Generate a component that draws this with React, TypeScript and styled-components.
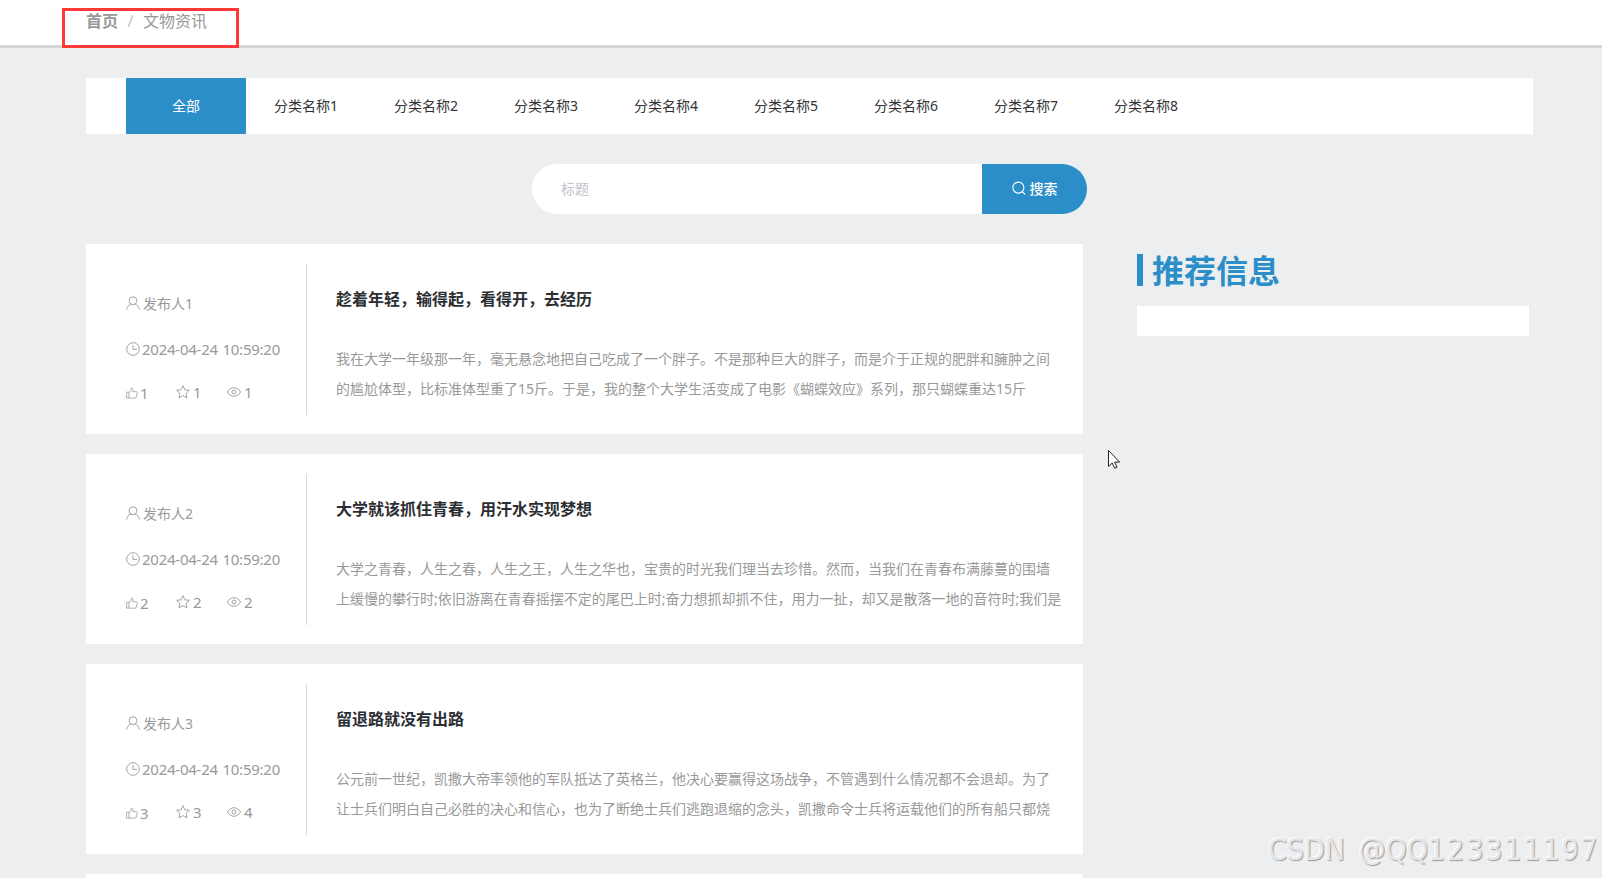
import React from "react";
import styled, { createGlobalStyle } from "styled-components";

const GlobalStyle = createGlobalStyle`
  * { box-sizing: border-box; }
  html, body { margin: 0; height: 100%; overflow: hidden; }
  body {
    background: #edeef0;
    font-family: "Noto Sans", "Noto Sans CJK SC", sans-serif;
    font-size: 14px;
    color: #333;
  }
`;

const Page = styled.div`
  position: relative;
  width: 1602px;
  height: 878px;
  overflow: hidden;
`;

const Header = styled.header`
  height: 48px;
  padding: 6px 86px 0;
  background: #fff;
  border-bottom: 3px solid #d3d7da;
`;

const Breadcrumb = styled.nav`
  display: flex;
  font-size: 16px;
  line-height: 30px;
  color: #999;
`;

const Crumb = styled.span<{ $home?: boolean }>`
  font-weight: ${(p) => (p.$home ? 700 : 400)};
`;

const Separator = styled.span`
  width: 25px;
  text-align: center;
  color: #c0c4cc;
`;

const Highlight = styled.div`
  position: absolute;
  left: 62px;
  top: 8px;
  width: 177px;
  height: 40px;
  border: 3px solid #ff3838;
`;

const Main = styled.main`
  padding: 30px 69px 0 86px;
`;

const Tabs = styled.div`
  display: flex;
  height: 56px;
  padding-left: 40px;
  background: #fff;
`;

const Tab = styled.div<{ $active?: boolean }>`
  width: 120px;
  line-height: 56px;
  text-align: center;
  color: ${(p) => (p.$active ? "#fff" : "#333")};
  background: ${(p) => (p.$active ? "#2c8ec9" : "transparent")};
`;

const Search = styled.div`
  display: flex;
  width: 555px;
  height: 50px;
  margin: 30px 0 30px 446px;
  border-radius: 25px;
  overflow: hidden;
`;

const SearchField = styled.div`
  width: 450px;
  padding-left: 29px;
  line-height: 50px;
  color: #c0c4cc;
  background: #fff;
`;

const SearchButton = styled.div`
  display: flex;
  flex: 1;
  align-items: center;
  justify-content: center;
  gap: 4px;
  padding-bottom: 2px;
  color: #fff;
  font-weight: 500;
  background: #2c8ec9;
`;

const Columns = styled.div`
  display: flex;
  align-items: flex-start;
  gap: 54px;
`;

const List = styled.div`
  display: flex;
  flex-direction: column;
  gap: 20px;
  width: 997px;
`;

const Card = styled.article`
  display: flex;
  height: 190px;
  padding: 19px 0 19px 40px;
  background: #fff;
`;

const Meta = styled.div`
  display: flex;
  flex-direction: column;
  width: 181px;
  margin-top: 1px;
  border-right: 1px solid #d9d9d9;
  color: #999;
`;

const MetaRow = styled.div<{ $top: number }>`
  display: flex;
  align-items: center;
  height: 24px;
  margin-top: ${(p) => p.$top}px;
  white-space: nowrap;
`;

const Author = styled.span`
  margin-left: 3px;
`;

const Time = styled.span`
  margin-left: 2px;
  font-size: 15px;
  letter-spacing: -0.25px;
  word-spacing: 1px;
`;

const Stat = styled.span<{ $drop?: boolean }>`
  display: flex;
  align-items: center;
  width: ${(p) => (p.$drop ? 50 : 51)}px;
  gap: ${(p) => (p.$drop ? 2 : 3)}px;
  font-size: 15px;
  padding-top: ${(p) => (p.$drop ? 2 : 0)}px;
`;

const Body = styled.div`
  padding: 21px 0 0 29px;
`;

const Title = styled.h3`
  margin: 0 0 30px;
  font-size: 16px;
  line-height: 30px;
  font-weight: 700;
  color: #2b2f33;
`;

const Line = styled.p`
  margin: 0;
  line-height: 30px;
  color: #999;
  white-space: nowrap;
`;

const Aside = styled.aside`
  width: 392px;
  padding-top: 10px;
`;

const AsideTitle = styled.h2`
  display: flex;
  height: 32px;
  margin: 0 0 20px;
  padding-left: 9px;
  border-left: 6px solid #2c8ec9;
  font-size: 32px;
  line-height: 34px;
  color: #2c8ec9;
`;

const AsideBox = styled.div`
  height: 30px;
  background: #fff;
`;

const Cursor = styled.svg`
  position: absolute;
  left: 1107px;
  top: 449px;
`;

const Watermark = styled.div`
  position: absolute;
  left: 1268px;
  top: 832px;
  font-family: "DejaVu Sans Condensed", "DejaVu Sans", sans-serif;
  font-stretch: condensed;
  font-size: 30px;
  line-height: 36px;
  word-spacing: 5px;
  color: #e6e7e9;
  text-shadow: 1px 1px 1px #999a9c, -1px -1px 1px #fff;
  white-space: nowrap;
`;

const WatermarkDigits = styled.span`
  letter-spacing: 1.9px;
`;

const Svg = styled.svg`
  flex: none;
  fill: none;
  stroke: currentColor;
  stroke-width: 0.9;
  stroke-linejoin: round;
`;

type IconName = "user" | "time" | "thumb" | "star" | "view" | "search";

const shapes: Record<IconName, React.ReactNode> = {
  user: <><circle cx="7" cy="4.7" r="3.9" /><path d="M.6 13.6C1.1 10.6 2.8 8.6 5 8M13.4 13.6C12.9 10.6 11.2 8.6 9 8" /></>,
  time: <><circle cx="7" cy="7" r="6.3" /><path d="M7 3v4.4h4" /></>,
  thumb: <path d="M.7 6h2.7v7H.7zM3.4 6.4C5.2 5.5 6 4 6 1.4c1.9-.5 2.6 1.2 1.8 4h4.2c1 0 1.4.6 1.2 1.4L11.9 12c-.2.7-.5 1-1.1 1H3.4" />,
  star: <path d="m7 .7 1.9 4.1 4.5.5-3.3 3 .9 4.6-4-2.3-4 2.3.9-4.6-3.3-3 4.5-.5z" />,
  view: <><path d="M.4 7C3.7 1.3 10.3 1.3 13.6 7 10.3 12.7 3.7 12.7.4 7z" /><circle cx="7" cy="7" r="2" /></>,
  search: <g strokeWidth="1.1"><circle cx="6.4" cy="6.6" r="5.5" /><path d="m10.3 10.7 2.8 2.8" /></g>,
};

function Icon({ name, size = 14 }: { name: IconName; size?: number }) {
  return <Svg width={size} height={size} viewBox="0 0 14 14">{shapes[name]}</Svg>;
}

const tabs = ["全部", ...Array.from({ length: 8 }, (_, i) => `分类名称${i + 1}`)];

const articles = [
  {
    count: 1,
    title: "趁着年轻，输得起，看得开，去经历",
    lines: [
      "我在大学一年级那一年，毫无悬念地把自己吃成了一个胖子。不是那种巨大的胖子，而是介于正规的肥胖和臃肿之间",
      "的尴尬体型，比标准体型重了15斤。于是，我的整个大学生活变成了电影《蝴蝶效应》系列，那只蝴蝶重达15斤",
    ],
  },
  {
    count: 2,
    title: "大学就该抓住青春，用汗水实现梦想",
    lines: [
      "大学之青春，人生之春，人生之王，人生之华也，宝贵的时光我们理当去珍惜。然而，当我们在青春布满藤蔓的围墙",
      "上缓慢的攀行时;依旧游离在青春摇摆不定的尾巴上时;奋力想抓却抓不住，用力一扯，却又是散落一地的音符时;我们是",
    ],
  },
  {
    count: 3,
    views: 4,
    title: "留退路就没有出路",
    lines: [
      "公元前一世纪，凯撒大帝率领他的军队抵达了英格兰，他决心要赢得这场战争，不管遇到什么情况都不会退却。为了",
      "让士兵们明白自己必胜的决心和信心，也为了断绝士兵们逃跑退缩的念头，凯撒命令士兵将运载他们的所有船只都烧",
    ],
  },
];

export default function App() {
  return (
    <Page>
      <GlobalStyle />
      <Header>
        <Breadcrumb>
          <Crumb $home>首页</Crumb>
          <Separator>/</Separator>
          <Crumb>文物资讯</Crumb>
        </Breadcrumb>
      </Header>
      <Highlight />
      <Main>
        <Tabs>
          {tabs.map((t, i) => <Tab key={t} $active={i === 0}>{t}</Tab>)}
        </Tabs>
        <Search>
          <SearchField>标题</SearchField>
          <SearchButton><Icon name="search" />搜索</SearchButton>
        </Search>
        <Columns>
          <List>
            {articles.map((a) => (
              <Card key={a.title}>
                <Meta>
                  <MetaRow $top={27}><Icon name="user" /><Author>发布人{a.count}</Author></MetaRow>
                  <MetaRow $top={22}><Icon name="time" /><Time>2024-04-24 10:59:20</Time></MetaRow>
                  <MetaRow $top={19}>
                    <Stat $drop><Icon name="thumb" size={12} />{a.count}</Stat>
                    <Stat><Icon name="star" />{a.count}</Stat>
                    <Stat><Icon name="view" />{a.views ?? a.count}</Stat>
                  </MetaRow>
                </Meta>
                <Body>
                  <Title>{a.title}</Title>
                  {a.lines.map((l) => <Line key={l}>{l}</Line>)}
                </Body>
              </Card>
            ))}
            <Card />
          </List>
          <Aside>
            <AsideTitle>推荐信息</AsideTitle>
            <AsideBox />
          </Aside>
        </Columns>
      </Main>
      <Cursor width="14" height="21" viewBox="0 0 14 21">
        <path d="M1.5 1.5v16l3.7-3.5 2.5 5.3 2.3-1-2.4-5.2h5z" fill="#fff" stroke="#222" strokeWidth="1" />
      </Cursor>
      <Watermark>CSDN @QQ<WatermarkDigits>123311197</WatermarkDigits></Watermark>
    </Page>
  );
}
